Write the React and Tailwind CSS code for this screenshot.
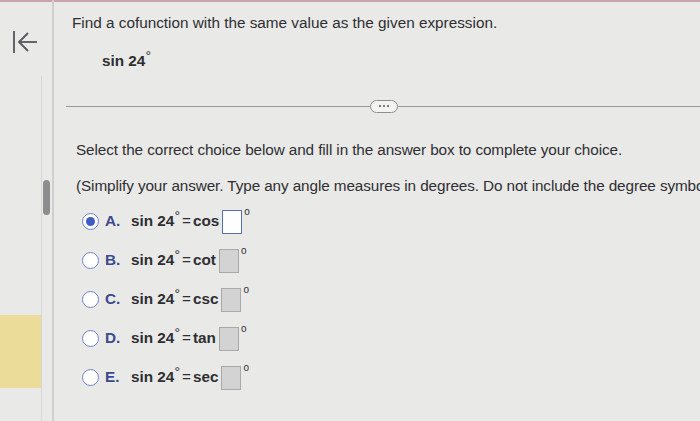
import React from "react";

const options = [
  { letter: "A", fn: "cos", selected: true },
  { letter: "B", fn: "cot" },
  { letter: "C", fn: "csc" },
  { letter: "D", fn: "tan" },
  { letter: "E", fn: "sec" },
];

function Radio({ selected }) {
  return (
    <span className="w-[17px] h-[17px] rounded-full border-[1.5px] border-[#6f82c6] bg-white flex items-center justify-center">
      {selected && <span className="w-[9px] h-[9px] rounded-full bg-[#3f5bc4]" />}
    </span>
  );
}

function Deg() {
  return <span className="relative -top-[5px] text-[14px] font-normal leading-none">°</span>;
}

export default function App() {
  return (
    <div
      className="w-[700px] h-[421px] overflow-hidden bg-[#e9e9e7] flex text-[#2f2f33]"
      style={{ fontFamily: '"Liberation Sans", Arial, sans-serif' }}
    >
      {/* Sidebar */}
      <div className="w-[54px] shrink-0 border-r-2 border-[#cfcfcd] flex flex-col relative">
        <div className="h-[2px] bg-[#c9a4ad]" />
        <div className="pl-[12px] pt-[28px] text-[#55575c]">
          <svg width="27" height="24" viewBox="0 0 27 24" fill="none" stroke="currentColor" strokeWidth="1.8">
            <path d="M2 1v22" />
            <path d="M25 12H8" />
            <path d="M16 3l-9 9 9 9" />
          </svg>
        </div>
        <div className="flex-1 flex mt-[22px]">
          <div className="w-[42px] border-r border-[#d6d6d4] flex flex-col">
            <div className="flex-1" />
            <div className="h-[73px] bg-[#ecdc9a] mb-[33px]" />
          </div>
        </div>
        <div className="absolute left-[43px] top-[180px] w-[7px] h-[35px] rounded-full bg-[#8d8d8f]" />
      </div>

      {/* Main */}
      <div className="flex-1 flex flex-col text-[15.3px]">
        <div className="h-[2px] bg-[#c9a4ad]" />
        <div className="pl-[18px] pt-[10px]">
          Find a cofunction with the same value as the given expression.
        </div>
        <div className="pl-[48px] pt-[15px] font-bold">
          sin 24<Deg />
        </div>

        <div className="mt-[27px] ml-[12px] flex items-center">
          <div className="w-[304px] h-px bg-[#9a9a9c]" />
          <div className="w-[28px] h-[13px] rounded-full border border-[#8f8f93] bg-[#f4f4f2] flex items-center justify-center gap-[2px]">
            <span className="w-[2px] h-[2px] rounded-full bg-[#555]" />
            <span className="w-[2px] h-[2px] rounded-full bg-[#555]" />
            <span className="w-[2px] h-[2px] rounded-full bg-[#555]" />
          </div>
          <div className="flex-1 h-px bg-[#9a9a9c]" />
        </div>

        <div className="pl-[22px] pt-[26px] whitespace-nowrap tracking-[-0.1px]">
          Select the correct choice below and fill in the answer box to complete your choice.
        </div>
        <div className="pl-[22px] pt-[13px] whitespace-nowrap tracking-[-0.1px]">
          (Simplify your answer. Type any angle measures in degrees. Do not include the degree symbol in your answer.)
        </div>

        <div className="pl-[28px] pt-[12px] flex flex-col gap-[15px]">
          {options.map((o) => (
            <div key={o.letter} className="flex items-center h-[24px]">
              <Radio selected={o.selected} />
              <span className="ml-[6px] w-[26px] font-bold text-[#3b4a8c]">{o.letter}.</span>
              <span className="font-bold">
                sin 24<Deg />
                <span className="ml-[2px] font-normal">=</span>
                <span className="ml-[2px]">{o.fn}</span>
              </span>
              <span
                className={
                  o.selected
                    ? "ml-[3px] w-[20px] h-[24px] border border-[#5a6fb8] bg-white"
                    : "ml-[3px] w-[20px] h-[24px] border border-[#a9a9ab] bg-[#d3d3d3]"
                }
              />
              <span className="self-start -mt-[3px] ml-[2px] text-[10px] leading-none">o</span>
            </div>
          ))}
        </div>
      </div>
    </div>
  );
}
